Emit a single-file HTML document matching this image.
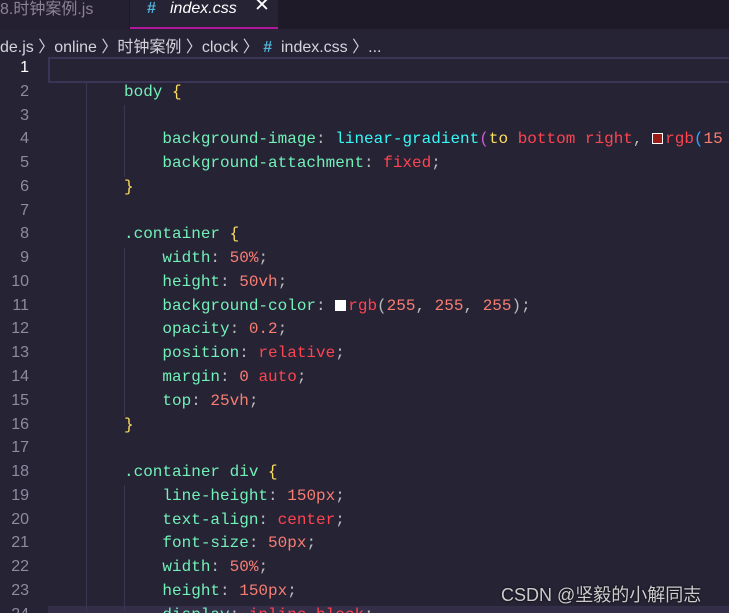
<!DOCTYPE html><html><head><meta charset="utf-8"><style>
html,body{margin:0;width:729px;height:613px;overflow:hidden}
body{background:#262335;font-family:"Liberation Sans","Noto Sans CJK SC",sans-serif;position:relative}
.tabs{position:absolute;left:0;top:0;width:729px;height:29px;background:#1e1a27}
.t1{position:absolute;left:0;top:0;width:129px;height:29px;background:#241f31;color:#8a8494;font-size:16px;line-height:20px}
.t2{position:absolute;left:130px;top:0;width:148px;height:27px;background:#262335;border-bottom:2px solid #b0179a;color:#fff;font-size:16px;font-style:italic;line-height:18px}
.bc{position:absolute;left:0;top:33px;color:#d6d3dc;font-size:16px;white-space:nowrap}
.hash{color:#4fb3d9;font-style:normal;font-weight:bold}
.ln{position:absolute;left:0;width:29px;text-align:right;color:#8e8aa0;font:16px/24px "Liberation Sans",sans-serif}
.code{position:absolute;left:86px;white-space:pre;font:16px/24px "Liberation Mono",monospace;color:#bbbbbb}
.p{color:#72f1b8}.v{color:#fe4450}.n{color:#f97e72}.b{color:#fede5d}.s{color:#72f1b8}.f{color:#36f9f6}.pp{color:#c65ed0}.y{color:#fede5d}.bl{color:#2ea7ff}
.g{position:absolute;width:1px;background:#3a3650}
.sw{display:inline-block;width:11px;height:11px;border:1px solid #fff;vertical-align:-1px;margin-right:2px;box-sizing:border-box}
</style></head><body>
<div class="tabs"><div class="t1">8.时钟案例.js</div><div class="t2"><span class="hash" style="position:absolute;left:17px;top:0">#</span><span style="position:absolute;left:40px;top:0">index.css</span><span style="position:absolute;left:124px;top:-3px;font-style:normal;font-size:19px">✕</span></div></div>
<div class="bc">de.js 〉online 〉时钟案例 〉clock 〉 <span class="hash">#</span>&nbsp; index.css 〉...</div>
<div style="position:absolute;left:48px;top:57px;right:0;height:22px;border:2px solid #3c3457;border-right:none"></div>
<div style="position:absolute;left:48px;top:606px;right:0;height:10px;background:#342e48"></div>
<div class="g" style="left:86px;top:81px;height:532px"></div>
<div class="g" style="left:124px;top:105px;height:72px"></div>
<div class="g" style="left:124px;top:248px;height:168px"></div>
<div class="g" style="left:124px;top:485px;height:128px"></div>
<div id="L"></div>
<script>
var lines=[
'',
'<span class="s">body</span> <span class="b">{</span>',
'',
'    <span class="p">background-image</span>: <span class="f">linear-gradient</span><span class="pp">(</span><span class="y">to</span> <span class="v">bottom right</span>, <span class="sw" style="background:#9b1c16"></span><span class="v">rgb</span><span class="bl">(</span><span class="n">15</span>',
'    <span class="p">background-attachment</span>: <span class="v">fixed</span>;',
'<span class="b">}</span>',
'',
'<span class="s">.container</span> <span class="b">{</span>',
'    <span class="p">width</span>: <span class="n">50%</span>;',
'    <span class="p">height</span>: <span class="n">50vh</span>;',
'    <span class="p">background-color</span>: <span class="sw" style="background:#fff"></span><span class="v">rgb</span>(<span class="n">255</span>, <span class="n">255</span>, <span class="n">255</span>);',
'    <span class="p">opacity</span>: <span class="n">0.2</span>;',
'    <span class="p">position</span>: <span class="v">relative</span>;',
'    <span class="p">margin</span>: <span class="n">0</span> <span class="v">auto</span>;',
'    <span class="p">top</span>: <span class="n">25vh</span>;',
'<span class="b">}</span>',
'',
'<span class="s">.container div</span> <span class="b">{</span>',
'    <span class="p">line-height</span>: <span class="n">150px</span>;',
'    <span class="p">text-align</span>: <span class="v">center</span>;',
'    <span class="p">font-size</span>: <span class="n">50px</span>;',
'    <span class="p">width</span>: <span class="n">50%</span>;',
'    <span class="p">height</span>: <span class="n">150px</span>;',
'    <span class="p">display</span>: <span class="v">inline-block</span>;'];
var h='';for(var i=0;i<lines.length;i++){var t=56+i*23.77;h+='<div class="ln" style="top:'+t+'px;'+(i==0?'color:#fff':'')+'">'+(i+1)+'</div><div class="code" style="top:'+t+'px;left:'+(i==0?86:124)+'px">'+lines[i]+'</div>';}
document.getElementById('L').innerHTML=h;
</script>
<div style="position:absolute;left:501px;top:581px;color:#ccc;font-size:18px;text-shadow:0 0 2px #000">CSDN @坚毅的小解同志</div>
</body></html>
